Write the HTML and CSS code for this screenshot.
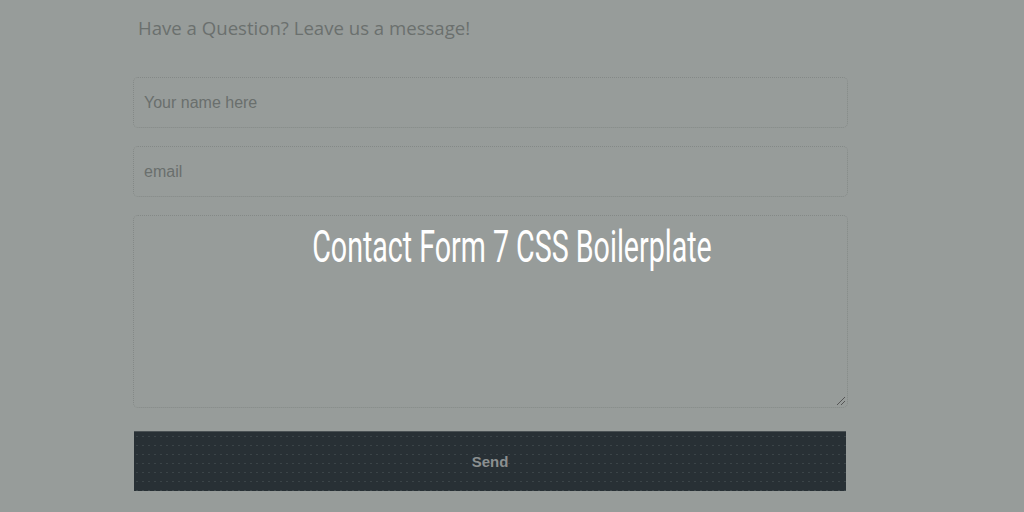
FILE: index.html
```html
<!DOCTYPE html>
<html>
<head>
<meta charset="utf-8">
<link rel="stylesheet" href="styles.css">
</head>
<body>
<div class="page">
  <div class="form">
    <p class="intro">Have a Question? Leave us a message!</p>
    <div class="field"><span class="ph">Your name here</span></div>
    <div class="field"><span class="ph">email</span></div>
    <div class="field area">
      <span class="grip"></span>
    </div>
    <div class="send">Send</div>
  </div>
  <h1 class="title">Contact Form 7 CSS Boilerplate</h1>
</div>
</body>
</html>
```

FILE: styles.css
```css
html, body {
  margin: 0;
  padding: 0;
  width: 1024px;
  height: 512px;
  overflow: hidden;
  background: #979c9a;
}
.page {
  position: relative;
  width: 1024px;
  height: 512px;
}
.form {
  display: flex;
  flex-direction: column;
  width: 715px;
  margin-left: 133px;
}
.intro {
  margin: 13px 0 0 5px;
  height: 29px;
  font-family: "Open Sans", sans-serif;
  font-size: 18.6px;
  line-height: 29px;
  color: #6b706e;
}
.field {
  box-sizing: border-box;
  height: 51px;
  border: 1px dotted #848987;
  border-radius: 5px;
  margin-top: 18px;
  padding-left: 10px;
  display: flex;
  align-items: center;
}
.form .field:first-of-type { margin-top: 35px; }
.ph {
  font-family: "Liberation Sans", Arial, sans-serif;
  font-size: 16px;
  color: #6a6f6d;
}
.area {
  height: 193px;
  position: relative;
}
.grip {
  position: absolute;
  right: 2px;
  bottom: 2px;
  width: 8px;
  height: 8px;
  background: linear-gradient(135deg, transparent 45%, #555 45%, #555 55%, transparent 55%, transparent 70%, #555 70%, #555 80%, transparent 80%);
}
.send {
  box-sizing: border-box;
  margin: 23px 2px 0 1px;
  height: 60px;
  background-color: #283035;
  background-image: radial-gradient(#3b4448 0.6px, transparent 0.8px);
  background-size: 6px 9px;
  border-top: 1px solid #4a5154;
  display: flex;
  align-items: center;
  justify-content: center;
  font-family: "Liberation Sans", Arial, sans-serif;
  font-weight: bold;
  font-size: 15px;
  color: #8b8f90;
}
.title {
  position: absolute;
  left: 0;
  right: 0;
  top: 222px;
  margin: 0;
  text-align: center;
  font-family: "Roboto", sans-serif;
  font-weight: 400;
  font-size: 44px;
  line-height: 50px;
  color: #ffffff;
  transform: scaleX(0.65);
}
```
